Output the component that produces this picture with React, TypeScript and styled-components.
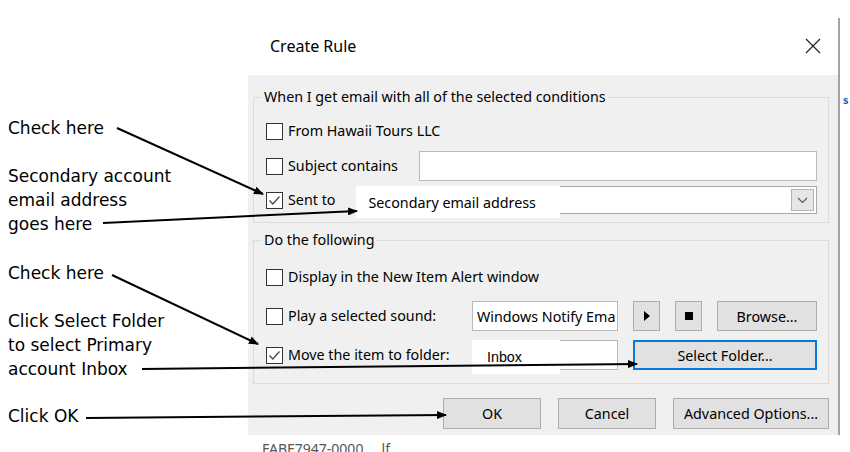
import React from "react";
import styled, { createGlobalStyle } from "styled-components";

const GlobalStyle = createGlobalStyle`
  html, body {
    margin: 0;
    padding: 0;
    background: #ffffff;
  }
  * {
    box-sizing: border-box;
  }
`;

const Page = styled.div`
  position: relative;
  width: 850px;
  height: 452px;
  overflow: hidden;
  display: flex;
  background: #ffffff;
`;

// left column with the instructions
const Notes = styled.div`
  width: 248px;
  flex: none;
  display: flex;
  flex-direction: column;
  padding: 116px 0 0 8px;
  font-family: "DejaVu Sans", Verdana, sans-serif;
  font-size: 17px;
  line-height: 24px;
  color: #000;
`;

const Note = styled.div<{ $gap: number }>`
  margin-top: ${(p) => p.$gap}px;
  white-space: nowrap;
`;

const Window = styled.div`
  width: 592px;
  flex: none;
  display: flex;
  flex-direction: column;
`;

const Dialog = styled.div`
  margin-top: 18px;
  border-right: 2px solid #a3a3a3;
  display: flex;
  flex-direction: column;
  font-family: "Noto Sans", "Open Sans", sans-serif;
  font-size: 14.3px;
  color: #000;
`;

const Header = styled.div`
  height: 75px;
  margin-top: -18px;
  background: #fff;
  display: flex;
  align-items: flex-start;
  justify-content: space-between;
  padding: 35px 17px 0 22px;
`;

const Title = styled.div`
  font-size: 16px;
  line-height: 22px;
`;

const Close = styled.div`
  width: 16px;
  height: 16px;
  margin-top: 3px;
  display: flex;
`;

const Body = styled.div`
  background: #f0f0f0;
  padding: 13px 9px 6px 5px;
  display: flex;
  flex-direction: column;
`;

const Group = styled.fieldset<{ $top: number; $bottom: number; $gap: number }>`
  margin: 0;
  border: 1px solid #dcdcdc;
  padding: ${(p) => p.$top}px 11px ${(p) => p.$bottom}px 12px;
  display: flex;
  flex-direction: column;
  gap: ${(p) => p.$gap}px;
  & + & {
    margin-top: 8px;
  }
`;

const Legend = styled.legend`
  padding: 0 2px;
  margin-left: -4px;
  line-height: 18px;
`;

const Row = styled.div<{ $h: number }>`
  height: ${(p) => p.$h}px;
  display: flex;
  align-items: center;
`;

const SoundGrid = styled.div`
  display: grid;
  grid-template-columns: 1fr 146px 27px 27px 100px;
  grid-auto-rows: 30px;
  column-gap: 15px;
  row-gap: 9px;
  align-items: center;
`;

const Wide = styled.div`
  grid-column: 1 / -1;
  display: flex;
  align-items: center;
`;

const Cell = styled.div<{ $span?: number }>`
  grid-column: span ${(p) => p.$span ?? 1};
  display: flex;
  align-items: center;
  height: 30px;
`;

const Box = styled.span`
  width: 17px;
  height: 17px;
  flex: none;
  background: #fff;
  border: 1px solid #333;
  display: flex;
  align-items: center;
  justify-content: center;
  margin-right: 5px;
`;

const Label = styled.span`
  white-space: nowrap;
  line-height: 18px;
`;

const Field = styled.div<{ $gap?: number }>`
  position: relative;
  flex: 1;
  align-self: stretch;
  margin-left: ${(p) => p.$gap ?? 0}px;
  background: #fff;
  border: 1px solid #b9b9b9;
  display: flex;
  align-items: center;
  padding-left: 4px;
  white-space: nowrap;
  overflow: visible;
`;

const Combo = styled(Field)`
  border-color: #a8a8a8;
  padding-right: 2px;
  justify-content: space-between;
`;

const DropButton = styled.div`
  width: 23px;
  height: 22px;
  background: #e6e6e6;
  border: 1px solid #b4b4b4;
  display: flex;
  align-items: center;
  justify-content: center;
`;

// white patch pasted over the field in the screenshot
const Pasted = styled.span<{ $w: number; $pad: number; $font?: string }>`
  position: absolute;
  left: -1px;
  top: -1px;
  bottom: -5px;
  width: ${(p) => p.$w}px;
  background: #fff;
  padding-left: ${(p) => p.$pad}px;
  display: flex;
  align-items: center;
  font-family: ${(p) => p.$font ?? "inherit"};
`;

const Button = styled.button<{ $w?: number; $focus?: boolean }>`
  width: ${(p) => (p.$w ? `${p.$w}px` : "100%")};
  height: ${(p) => (p.$w ? "31px" : "30px")};
  background: #e1e1e1;
  border: ${(p) => (p.$focus ? "2px solid #0a78d7" : "1px solid #adadad")};
  font-family: "Noto Sans", "Open Sans", sans-serif;
  font-size: 14.3px;
  color: #000;
  padding: 0;
  display: flex;
  align-items: center;
  justify-content: center;
`;

const Footer = styled.div`
  margin-top: 14px;
  display: flex;
  justify-content: flex-end;
  gap: 17px;
`;

const BehindText = styled.div`
  padding: 5px 0 0 14px;
  font-family: "Noto Sans", sans-serif;
  font-size: 14px;
  color: #555;
  white-space: pre;
  line-height: 18px;
`;

const Edge = styled.div`
  flex: 1;
  padding-top: 94px;
  font-family: "Noto Sans", sans-serif;
  font-size: 11px;
  font-weight: bold;
  color: #1f5fbf;
  line-height: 12px;
  padding-left: 3px;
`;

const Arrows = styled.svg`
  position: absolute;
  left: 0;
  top: 0;
  pointer-events: none;
`;

function Check({ on }: { on?: boolean }) {
  return (
    <Box>
      {on && (
        <svg width="13" height="11" viewBox="0 0 13 11">
          <polyline points="1.5,5.5 4.8,9 11.5,1.5" fill="none" stroke="#444" strokeWidth="1.2" />
        </svg>
      )}
    </Box>
  );
}

const arrows: [number, number, number, number][] = [
  [117, 128, 263, 194],
  [103, 223, 357, 211],
  [112, 275, 258, 344],
  [142, 369, 637, 364],
  [86, 418, 446, 415],
];

export default function App() {
  return (
    <>
      <GlobalStyle />
      <Page>
        <Notes>
          <Note $gap={0}>Check here</Note>
          <Note $gap={24}>
            Secondary account
            <br />
            email address
            <br />
            goes here
          </Note>
          <Note $gap={25}>Check here</Note>
          <Note $gap={24}>
            Click Select Folder
            <br />
            to select Primary
            <br />
            account Inbox
          </Note>
          <Note $gap={23}>Click OK</Note>
        </Notes>

        <Window>
          <Dialog>
            <Header>
              <Title>Create Rule</Title>
              <Close>
                <svg width="16" height="16" viewBox="0 0 16 16">
                  <path d="M1 1 L15 15 M15 1 L1 15" stroke="#222" strokeWidth="1.2" />
                </svg>
              </Close>
            </Header>
            <Body>
              <Group $top={10} $bottom={8} $gap={5}>
                <Legend>When I get email with all of the selected conditions</Legend>
                <Row $h={30}>
                  <Check />
                  <Label>From Hawaii Tours LLC</Label>
                </Row>
                <Row $h={30}>
                  <Check />
                  <Label>Subject contains</Label>
                  <Field $gap={21} />
                </Row>
                <Row $h={28}>
                  <Check on />
                  <Label>Sent to</Label>
                  <Combo $gap={21}>
                    <Pasted $w={204} $pad={12}>
                      Secondary email address
                    </Pasted>
                    <span />
                    <DropButton>
                      <svg width="11" height="7" viewBox="0 0 11 7">
                        <polyline points="1,1 5.5,5.5 10,1" fill="none" stroke="#555" strokeWidth="1.1" />
                      </svg>
                    </DropButton>
                  </Combo>
                </Row>
              </Group>

              <Group $top={13} $bottom={13} $gap={9}>
                <Legend>Do the following</Legend>
                <SoundGrid>
                  <Wide>
                    <Check />
                    <Label>Display in the New Item Alert window</Label>
                  </Wide>
                  <Cell>
                    <Check />
                    <Label>Play a selected sound:</Label>
                  </Cell>
                  <Cell>
                    <Field>Windows Notify Ema</Field>
                  </Cell>
                  <Cell>
                    <Button>
                      <svg width="6" height="10" viewBox="0 0 6 10">
                        <polygon points="0,0 6,5 0,10" fill="#000" />
                      </svg>
                    </Button>
                  </Cell>
                  <Cell>
                    <Button>
                      <svg width="8" height="8" viewBox="0 0 8 8">
                        <rect width="8" height="8" fill="#000" />
                      </svg>
                    </Button>
                  </Cell>
                  <Cell>
                    <Button>Browse...</Button>
                  </Cell>
                  <Cell>
                    <Check on />
                    <Label>Move the item to folder:</Label>
                  </Cell>
                  <Cell>
                    <Field>
                      <Pasted $w={88} $pad={15} $font={'"Liberation Sans", sans-serif'}>
                        Inbox
                      </Pasted>
                    </Field>
                  </Cell>
                  <Cell $span={3}>
                    <Button $focus>Select Folder...</Button>
                  </Cell>
                </SoundGrid>
              </Group>

              <Footer>
                <Button $w={98}>OK</Button>
                <Button $w={98}>Cancel</Button>
                <Button $w={156}>Advanced Options...</Button>
              </Footer>
            </Body>
          </Dialog>
          <BehindText>{"FABE7947-0000     lf"}</BehindText>
        </Window>

        <Edge>s</Edge>

        <Arrows width="850" height="452" viewBox="0 0 850 452">
          <defs>
            <marker id="head" markerWidth="10" markerHeight="8" refX="9" refY="4" orient="auto" markerUnits="userSpaceOnUse">
              <polygon points="0,0 10,4 0,8" fill="#000" />
            </marker>
          </defs>
          {arrows.map(([x1, y1, x2, y2], i) => (
            <line key={i} x1={x1} y1={y1} x2={x2} y2={y2} stroke="#000" strokeWidth="2" markerEnd="url(#head)" />
          ))}
        </Arrows>
      </Page>
    </>
  );
}
